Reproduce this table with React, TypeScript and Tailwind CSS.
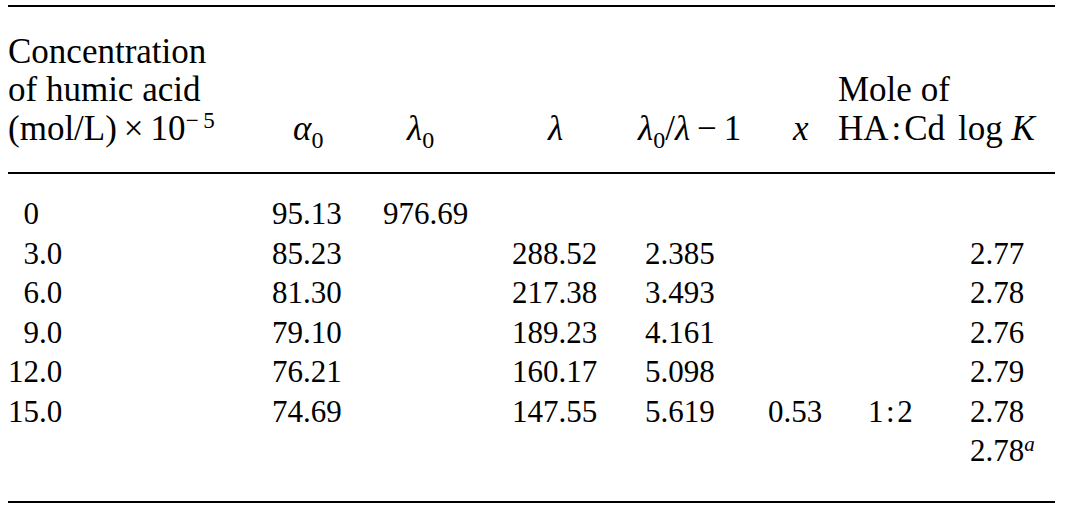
import React from 'react';

type Row = {
  conc: string;
  indent?: boolean;
  a0?: string;
  l0?: string;
  l?: string;
  ratio?: string;
  x?: string;
  mole?: string;
  logK?: React.ReactNode;
};

const rows: Row[] = [
  { conc: '0', indent: true, a0: '95.13', l0: '976.69' },
  { conc: '3.0', indent: true, a0: '85.23', l: '288.52', ratio: '2.385', logK: '2.77' },
  { conc: '6.0', indent: true, a0: '81.30', l: '217.38', ratio: '3.493', logK: '2.78' },
  { conc: '9.0', indent: true, a0: '79.10', l: '189.23', ratio: '4.161', logK: '2.76' },
  { conc: '12.0', a0: '76.21', l: '160.17', ratio: '5.098', logK: '2.79' },
  { conc: '15.0', a0: '74.69', l: '147.55', ratio: '5.619', x: '0.53', mole: '1\u200a:\u200a2', logK: '2.78' },
  {
    conc: '',
    logK: (
      <>
        2.78<sup className="italic text-[21px]">a</sup>
      </>
    ),
  },
];

// subscript zero used under the greek letters in the header
const Sub0 = () => <sub className="not-italic text-[24px] bottom-[-0.35em]">0</sub>;

export default function App() {
  return (
    <div className="min-h-[510px] bg-white pt-[5px] text-black font-['Liberation_Serif','Times_New_Roman',serif]">
      <div className="ml-[8px] w-[1047px] border-t-2 border-b-2 border-black">
        {/* header */}
        <div className="grid h-[167px] grid-cols-[285px_114px_141px_90px_155px_45px_120px_97px] items-end border-b-2 border-black pb-[24px] text-[35px] leading-[38.5px]">
          <div>
            <div>Concentration</div>
            <div>of humic acid</div>
            <div className="whitespace-nowrap">
              (mol/L)&thinsp;×&thinsp;10<sup className="text-[23px]">−&thinsp;5</sup>
            </div>
          </div>
          <div className="italic">
            α<Sub0 />
          </div>
          <div className="italic">
            λ<Sub0 />
          </div>
          <div className="italic">λ</div>
          <div className="whitespace-nowrap">
            <span className="italic">λ</span>
            <Sub0 />/<span className="italic">λ</span>&thinsp;−&thinsp;1
          </div>
          <div className="italic">x</div>
          <div className="whitespace-nowrap pr-[13px] text-right">
            <div>Mole of</div>
            <div>HA&#8202;:&#8202;Cd</div>
          </div>
          <div className="whitespace-nowrap">
            log <span className="italic">K</span>
          </div>
        </div>

        {/* body */}
        <div className="pt-[20px] pb-[30px] text-[31px] leading-[39.5px]">
          {rows.map((r, i) => (
            <div
              key={i}
              className="grid h-[39.5px] grid-cols-[264px_111px_129px_133px_123px_100px_102px_85px] whitespace-nowrap"
            >
              <div className={r.indent ? 'pl-[0.5em]' : ''}>{r.conc}</div>
              <div>{r.a0}</div>
              <div>{r.l0}</div>
              <div>{r.l}</div>
              <div>{r.ratio}</div>
              <div>{r.x}</div>
              <div>{r.mole}</div>
              <div>{r.logK}</div>
            </div>
          ))}
        </div>
      </div>
    </div>
  );
}
